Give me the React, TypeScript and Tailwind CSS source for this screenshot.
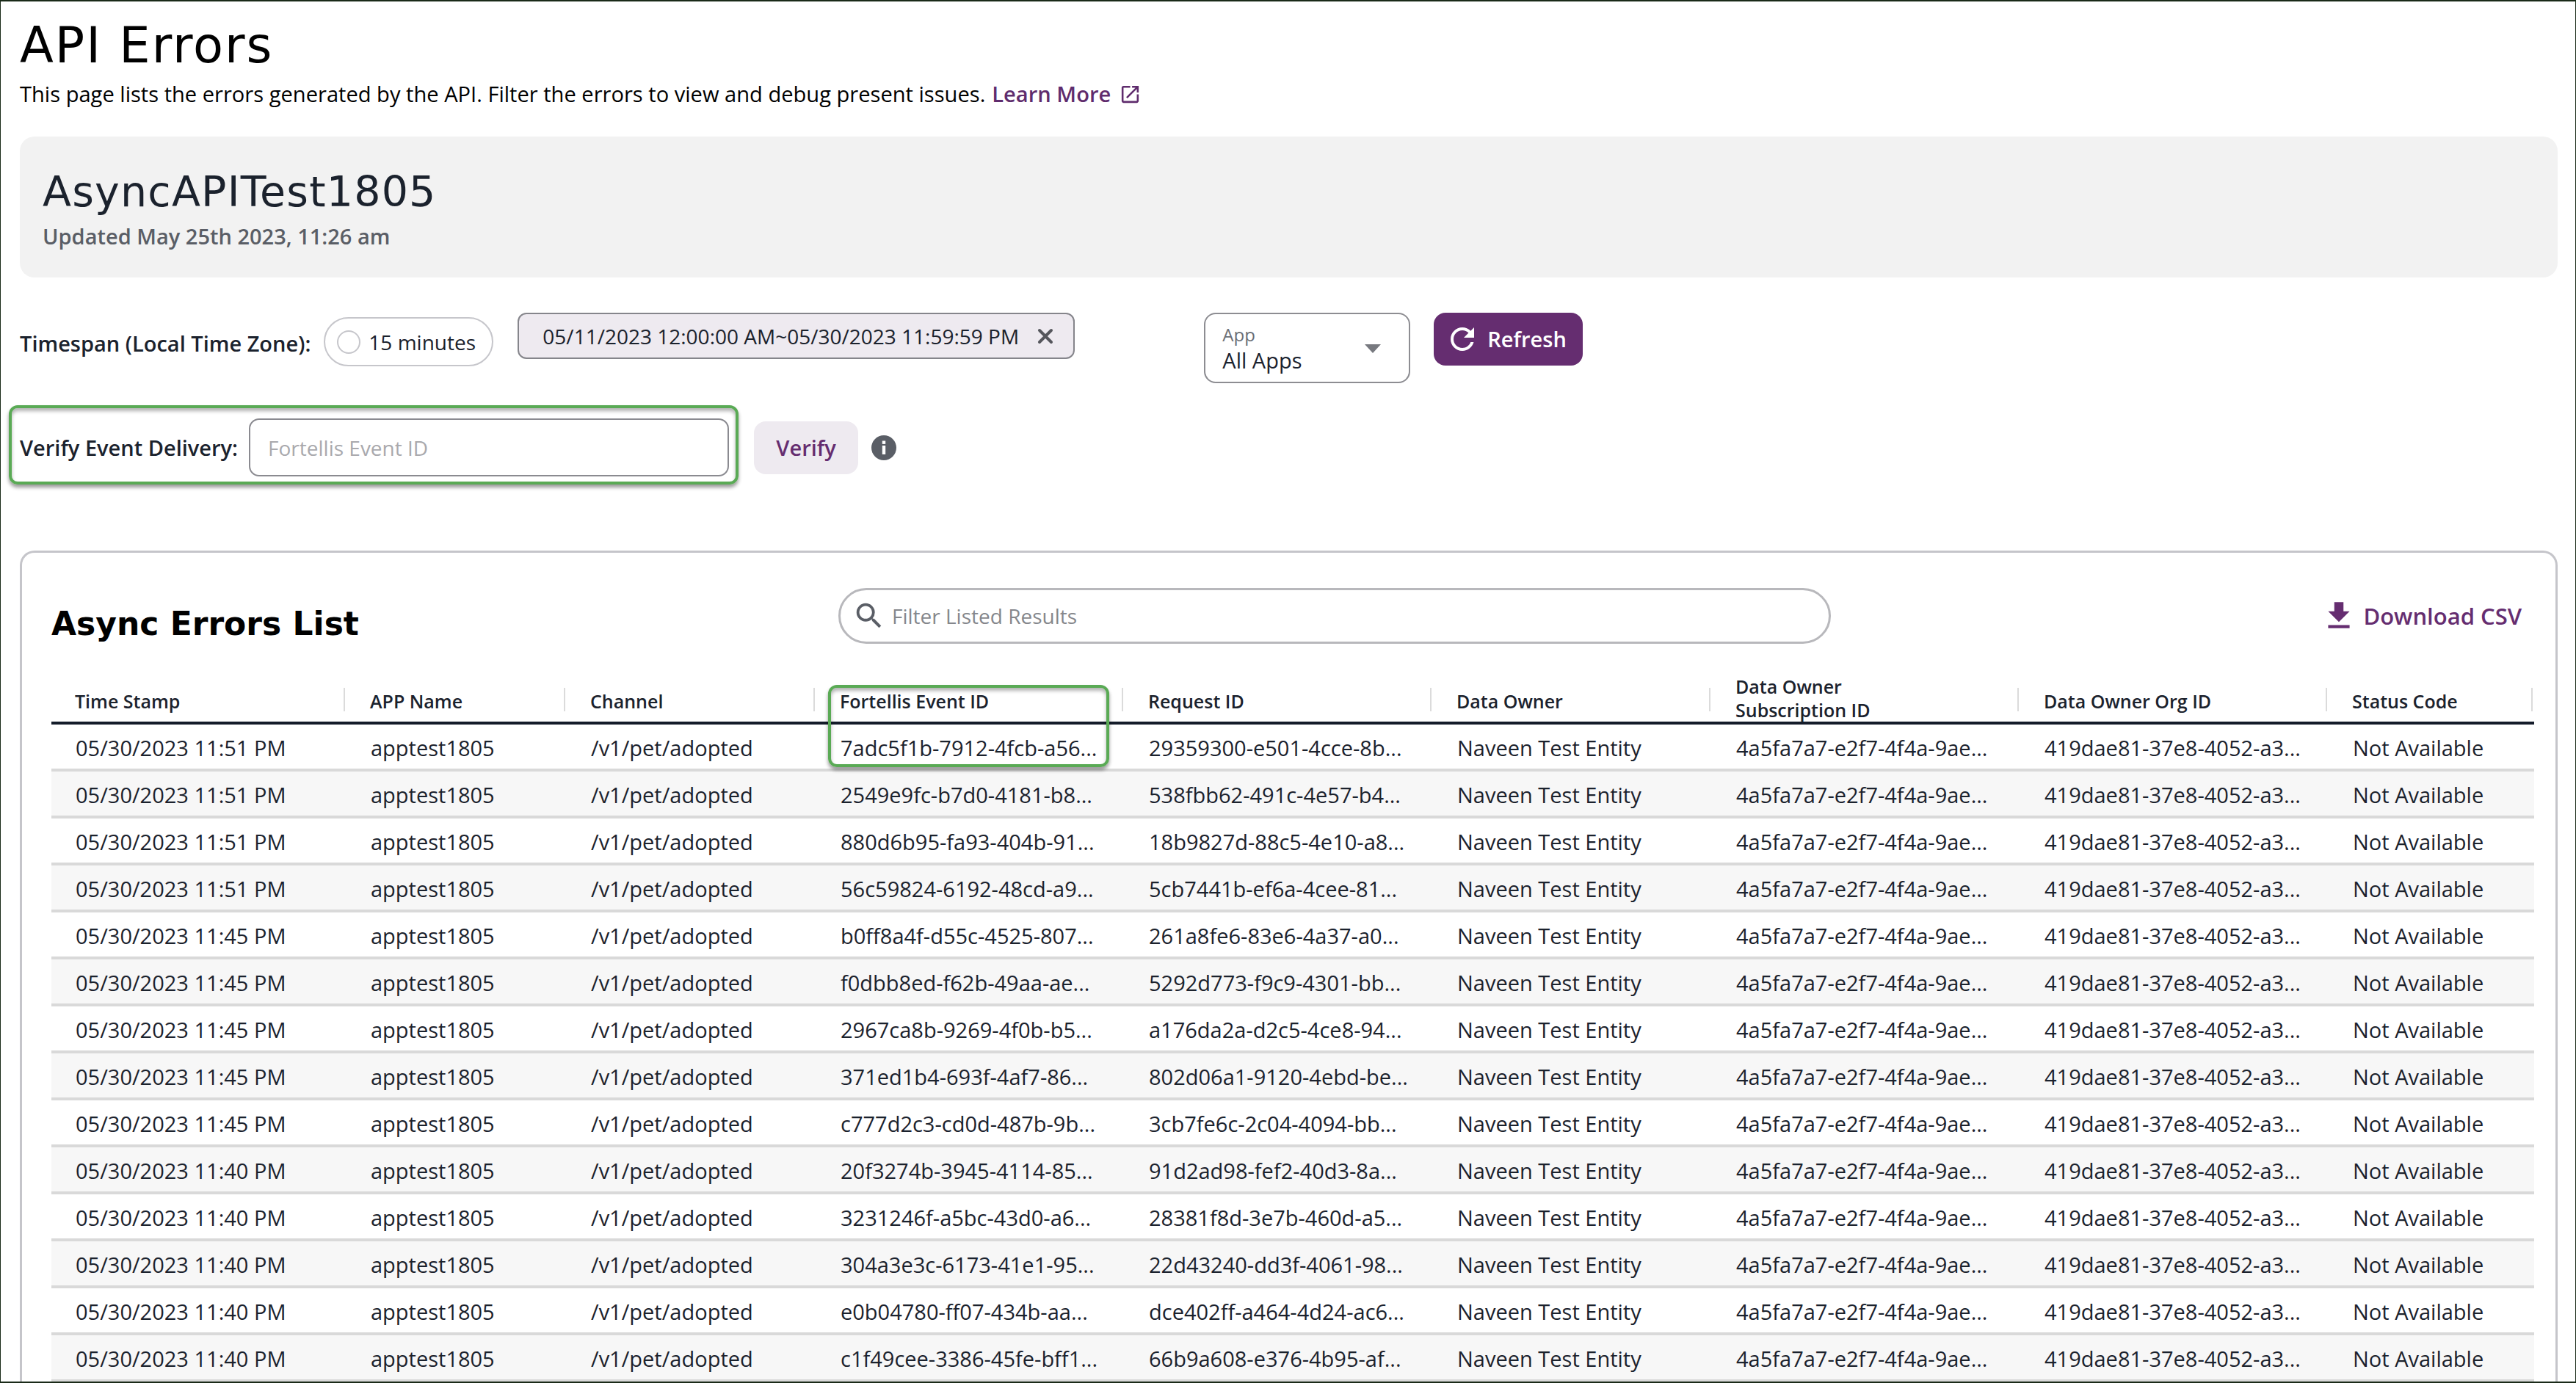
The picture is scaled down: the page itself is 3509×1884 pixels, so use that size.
const COLUMNS = [
  { label: 'Time Stamp' },
  { label: 'APP Name' },
  { label: 'Channel' },
  { label: 'Fortellis Event ID' },
  { label: 'Request ID' },
  { label: 'Data Owner' },
  { label: 'Data Owner Subscription ID', wrap: true },
  { label: 'Data Owner Org ID' },
  { label: 'Status Code' },
];

const ROWS = [
  ['11:51', '7adc5f1b-7912-4fcb-a56...', '29359300-e501-4cce-8b...'],
  ['11:51', '2549e9fc-b7d0-4181-b8...', '538fbb62-491c-4e57-b4...'],
  ['11:51', '880d6b95-fa93-404b-91...', '18b9827d-88c5-4e10-a8...'],
  ['11:51', '56c59824-6192-48cd-a9...', '5cb7441b-ef6a-4cee-81...'],
  ['11:45', 'b0ff8a4f-d55c-4525-807...', '261a8fe6-83e6-4a37-a0...'],
  ['11:45', 'f0dbb8ed-f62b-49aa-ae...', '5292d773-f9c9-4301-bb...'],
  ['11:45', '2967ca8b-9269-4f0b-b5...', 'a176da2a-d2c5-4ce8-94...'],
  ['11:45', '371ed1b4-693f-4af7-86...', '802d06a1-9120-4ebd-be...'],
  ['11:45', 'c777d2c3-cd0d-487b-9b...', '3cb7fe6c-2c04-4094-bb...'],
  ['11:40', '20f3274b-3945-4114-85...', '91d2ad98-fef2-40d3-8a...'],
  ['11:40', '3231246f-a5bc-43d0-a6...', '28381f8d-3e7b-460d-a5...'],
  ['11:40', '304a3e3c-6173-41e1-95...', '22d43240-dd3f-4061-98...'],
  ['11:40', 'e0b04780-ff07-434b-aa...', 'dce402ff-a464-4d24-ac6...'],
  ['11:40', 'c1f49cee-3386-45fe-bff1...', '66b9a608-e376-4b95-af...'],
];

const GRID = 'grid grid-cols-[400px_300px_340px_420px_420px_380px_420px_420px_280px]';

export default function App() {
  return (
    <div className="relative h-[1884px] w-[3509px] overflow-hidden border-x-[1px] border-y-[2px] border-[#1a2a18] bg-white font-['Open_Sans',sans-serif] text-[#1b222d]">
      <div className="pl-[26px] pr-[24px]">
        {/* Page heading */}
        <h1 className="mt-[16px] font-['DejaVu_Sans',sans-serif] text-[67px] leading-[88px] tracking-[2px] text-black">API Errors</h1>
        <p className="mt-[2px] flex items-center text-[29.1px] leading-[40px] text-black">
          This page lists the errors generated by the API. Filter the errors to view and debug present issues.
          <span className="ml-[9px] font-semibold text-[#5f2c6d]">Learn More</span>
          <svg className="ml-[11px]" width="31" height="31" viewBox="0 0 24 24" fill="#5f2c6d">
            <path d="M19 19H5V5h7V3H5a2 2 0 0 0-2 2v14c0 1.1.9 2 2 2h14c1.1 0 2-.9 2-2v-7h-2v7zM14 3v2h3.59l-9.83 9.83 1.41 1.41L19 6.41V10h2V3h-7z" />
          </svg>
        </p>

        {/* Summary panel */}
        <div className="mt-[38px] flex h-[192px] flex-col justify-center rounded-[20px] bg-[#f2f2f2] pl-[31px]">
          <div className="font-['DejaVu_Sans',sans-serif] text-[57px] leading-[76px] tracking-[1.2px] text-[#1b222d]">AsyncAPITest1805</div>
          <div className="mt-[3px] text-[29px] font-semibold leading-[40px] text-[#5a5e66]">Updated May 25th 2023, 11:26 am</div>
        </div>

        {/* Timespan filters */}
        <div className="mt-[48px] flex h-[96px] items-start">
          <span className="mt-[22px] text-[29px] font-semibold leading-[40px]">Timespan (Local Time Zone):</span>
          <div className="ml-[18px] mt-[6px] flex h-[67px] w-[231px] items-center rounded-full border-[2px] border-[#c6c6cb] pl-[16px]">
            <span className="h-[32px] w-[32px] rounded-full border-[2px] border-[#c6c6cb]" />
            <span className="ml-[11px] text-[28px] leading-[40px]">15 minutes</span>
          </div>
          <div className="ml-[33px] flex h-[63px] w-[759px] items-center rounded-[12px] border-[2px] border-[#85858b] bg-[#eeeaf0] pl-[32px]">
            <span className="text-[28px] leading-[40px]">05/11/2023 12:00:00 AM~05/30/2023 11:59:59 PM</span>
            <svg className="ml-[25px]" width="22" height="22" viewBox="0 0 22 22" stroke="#55565c" strokeWidth="4" strokeLinecap="round">
              <path d="M3 3l16 16M19 3 3 19" />
            </svg>
          </div>
          <div className="relative ml-[176px] h-[96px] w-[281px] rounded-[16px] border-[2px] border-[#8d8d92] pl-[23px]">
            <div className="mt-[12px] text-[24px] leading-[32px] text-[#6b6f76]">App</div>
            <div className="text-[29px] leading-[38px]">All Apps</div>
            <svg className="absolute right-[38px] top-[41px]" width="22" height="12" viewBox="0 0 22 12">
              <path d="M0 0h22L11 12z" fill="#77797f" />
            </svg>
          </div>
          <button className="ml-[32px] flex h-[72px] w-[203px] items-center rounded-[16px] bg-[#652d70] pl-[15px] text-[29px] font-semibold text-white">
            <svg width="48" height="48" viewBox="0 0 24 24" fill="white">
              <path d="M17.65 6.35C16.2 4.9 14.21 4 12 4c-4.42 0-7.99 3.58-7.99 8s3.57 8 7.99 8c3.73 0 6.84-2.55 7.73-6h-2.08c-.82 2.33-3.04 4-5.65 4-3.31 0-6-2.69-6-6s2.69-6 6-6c1.66 0 3.14.69 4.22 1.78L13 11h7V4l-2.35 2.35z" />
            </svg>
            <span className="ml-[10px]">Refresh</span>
          </button>
        </div>

        {/* Verify event delivery */}
        <div className="mt-[48px] flex h-[79px] items-center">
          <span className="text-[29px] font-semibold leading-[40px]">Verify Event Delivery:</span>
          <div className="ml-[15px] flex h-[79px] w-[654px] items-center rounded-[14px] border-[2px] border-[#8a8a90] pl-[24px] text-[28px] text-[#a9a9ad]">
            Fortellis Event ID
          </div>
          <button className="ml-[34px] h-[72px] w-[142px] rounded-[16px] bg-[#eeeaf0] text-[29px] font-semibold text-[#652d70]">Verify</button>
          <svg className="ml-[18px]" width="34" height="34" viewBox="0 0 34 34">
            <circle cx="17" cy="17" r="17" fill="#5a5e66" />
            <rect x="14.8" y="14" width="4.4" height="12" fill="white" />
            <rect x="14.8" y="7.5" width="4.4" height="4.4" fill="white" />
          </svg>
        </div>

        {/* Errors card */}
        <div className="mt-[101px] h-[1200px] rounded-t-[20px] border-x-[3px] border-t-[3px] border-[#c5c5ca] pl-[40px] pr-[29px] pt-[48px]">
          <div className="flex h-[76px] items-center">
            <h2 className="mt-[22px] w-[1072px] font-['DejaVu_Sans',sans-serif] text-[44px] font-semibold leading-[60px] text-black">Async Errors List</h2>
            <div className="flex h-[76px] w-[1352px] items-center rounded-full border-[3px] border-[#b8b8bc] pl-[16px] text-[28px] text-[#85878c]">
              <svg width="46" height="46" viewBox="0 0 24 24" fill="#5a5e66">
                <path d="M15.5 14h-.79l-.28-.27A6.471 6.471 0 0 0 16 9.5 6.5 6.5 0 1 0 9.5 16c1.61 0 3.09-.59 4.23-1.57l.27.28v.79l5 4.99L20.49 19l-4.99-5zm-6 0C7.01 14 5 11.99 5 9.5S7.01 5 9.5 5 14 7.01 14 9.5 11.99 14 9.5 14z" />
              </svg>
              <span className="ml-[8px]">Filter Listed Results</span>
            </div>
            <div className="ml-auto mr-[17px] flex items-center text-[31px] font-semibold text-[#652d70]">
              <svg width="50" height="50" viewBox="0 0 24 24" fill="#652d70">
                <path d="M19 9h-4V3H9v6H5l7 7 7-7zM5 18v2h14v-2H5z" />
              </svg>
              <span className="ml-[8px]">Download CSV</span>
            </div>
          </div>

          {/* Table header */}
          <div className={`${GRID} mt-[60px] h-[50px] border-b-[4px] border-[#141c2a]`}>
            {COLUMNS.map((col) => (
              <div key={col.label} className="relative h-[32px] border-r-[2px] border-[#dbdbdb] pl-[34px] first:pl-[32px]">
                {col.wrap ? (
                  <div className="absolute left-[34px] top-[-18px] w-[240px] text-[25px] font-semibold leading-[32px]">{col.label}</div>
                ) : (
                  <div className="mt-[2px] text-[25px] font-semibold leading-[32px]">{col.label}</div>
                )}
              </div>
            ))}
          </div>

          {/* Table rows */}
          {ROWS.map((row, i) => (
            <div key={row[1]} className={`${GRID} h-[64px] items-center border-b-[4px] border-[#d9d9d9] pt-[3px] text-[29px] ${i % 2 === 1 ? 'bg-[#f7f7f7]' : 'bg-white'}`}>
              <div className="pl-[33px]">05/30/2023 {row[0]} PM</div>
              <div className="pl-[35px]">apptest1805</div>
              <div className="pl-[35px]">/v1/pet/adopted</div>
              <div className="pl-[35px]">{row[1]}</div>
              <div className="pl-[35px]">{row[2]}</div>
              <div className="pl-[35px]">Naveen Test Entity</div>
              <div className="pl-[35px]">4a5fa7a7-e2f7-4f4a-9ae...</div>
              <div className="pl-[35px]">419dae81-37e8-4052-a3...</div>
              <div className="pl-[35px]">Not Available</div>
            </div>
          ))}
        </div>
      </div>

      {/* Green annotation callouts */}
      <div className="absolute left-[11px] top-[550px] h-[108px] w-[994px] rounded-[12px] border-[4px] border-[#5aaa55] shadow-[0_4px_5px_rgba(0,0,0,0.4),inset_0_4px_5px_rgba(0,0,0,0.3)]" />
      <div className="absolute left-[1127px] top-[931px] h-[112px] w-[383px] rounded-[12px] border-[4px] border-[#5aaa55] shadow-[0_4px_5px_rgba(0,0,0,0.4),inset_0_4px_5px_rgba(0,0,0,0.3)]" />
    </div>
  );
}
